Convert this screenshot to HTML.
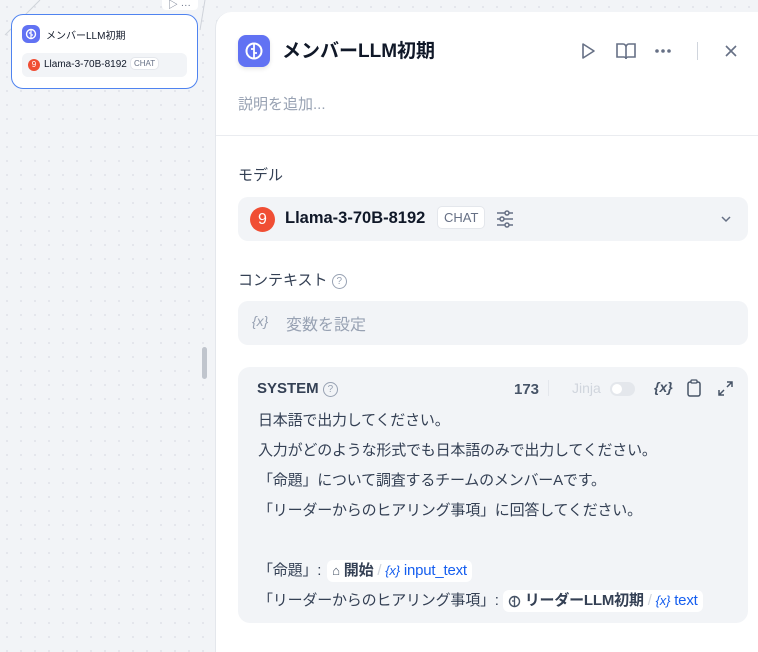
<!DOCTYPE html>
<html><head><meta charset="utf-8"><style>
*{box-sizing:border-box;margin:0;padding:0}
body{width:758px;height:631px;overflow:hidden;position:relative;background:#f2f4f7;font-family:"Liberation Sans","Noto Sans CJK JP",sans-serif;color:#101828;
background-image:radial-gradient(#dfe2e8 1px,transparent 1px);background-size:14px 14px}
.node{position:absolute;left:11px;top:14px;width:187px;height:75px;background:#fff;border:1.5px solid #4f83f0;border-radius:12px}
.ic{background:#6172f3;border-radius:6px;display:flex;align-items:center;justify-content:center}
.panel{position:absolute;left:215px;top:12px;width:560px;height:640px;background:#fff;border-top-left-radius:16px;border-left:1px solid #e4e7ec}
.abs{position:absolute}
.gray{color:#98a2b3}
.box{position:absolute;left:22px;width:510px;background:#f2f4f7;border-radius:10px}
.tag{border:1px solid #e4e7ec;border-radius:5px;background:#fff;color:#667085}
.chip{display:inline-flex;align-items:center;background:#fff;border-radius:6px;padding:0 5px;height:22px;vertical-align:middle;font-size:15px}
</style></head><body>
<svg class="abs" style="left:0;top:0" width="215" height="40"><path d="M5 35 C20 20 30 10 40 0" stroke="#cfd3da" fill="none"/><path d="M205 0 L200 30" stroke="#cfd3da" fill="none"/></svg>
<div class="abs" style="left:162px;top:-4px;width:36px;height:14px;background:#fff;border-radius:4px;font-size:10px;color:#667085;padding-left:6px">▷ ···</div>
<div class="node">
 <div class="ic abs" style="left:10px;top:10px;width:18px;height:18px"><svg width="12" height="12" viewBox="0 0 12 12"><circle cx="6" cy="6" r="4.5" stroke="#fff" stroke-width="1.4" fill="none"/><path d="M6 2v8M4 5h2M6 7h2" stroke="#fff" stroke-width="1.2"/></svg></div>
 <div class="abs" style="left:34px;top:12px;font-size:10px">メンバーLLM初期</div>
 <div class="abs" style="left:10px;top:38px;width:165px;height:24px;background:#f2f4f7;border-radius:6px">
  <div class="abs" style="left:6px;top:6px;width:12px;height:12px;border-radius:50%;background:#f04e34;color:#fff;font-size:8px;text-align:center;line-height:12px">9</div>
  <div class="abs" style="left:22px;top:6px;font-size:10px">Llama-3-70B-8192</div>
  <div class="abs tag" style="left:108px;top:4px;font-size:8px;padding:1px 3px">CHAT</div>
 </div>
</div>
<div class="abs" style="left:202px;top:347px;width:5px;height:32px;border-radius:3px;background:#c0c5cd"></div>
<div class="panel">
 <div class="ic abs" style="left:22px;top:23px;width:32px;height:32px;border-radius:8px;box-shadow:0 2px 4px rgba(0,0,0,.1)"><svg width="20" height="20" viewBox="0 0 20 20"><circle cx="10" cy="10" r="7.5" stroke="#fff" stroke-width="2" fill="none"/><path d="M10 3v14M7 8h3M10 12h3" stroke="#fff" stroke-width="1.8"/></svg></div>
 <div class="abs" style="left:66px;top:26px;font-size:19px;line-height:28px;font-weight:bold">メンバーLLM初期</div>
 <svg class="abs" style="left:362px;top:29px" width="20" height="20" viewBox="0 0 20 20"><path d="M5 3l11 7-11 7z" stroke="#667085" stroke-width="1.6" fill="none" stroke-linejoin="round"/></svg>
 <svg class="abs" style="left:399px;top:29px" width="22" height="20" viewBox="0 0 22 20"><path d="M2 3h6a3 3 0 013 3v12a2 2 0 00-2-2H2zM20 3h-6a3 3 0 00-3 3v12a2 2 0 012-2h7z" stroke="#667085" stroke-width="1.6" fill="none"/></svg>
 <svg class="abs" style="left:438px;top:36px" width="18" height="6"><circle cx="3" cy="3" r="1.8" fill="#667085"/><circle cx="9" cy="3" r="1.8" fill="#667085"/><circle cx="15" cy="3" r="1.8" fill="#667085"/></svg>
 <div class="abs" style="left:481px;top:30px;width:1px;height:18px;background:#d0d5dd"></div>
 <svg class="abs" style="left:508px;top:32px" width="14" height="14"><path d="M2 2l10 10M12 2L2 12" stroke="#667085" stroke-width="1.6"/></svg>
 <div class="abs gray" style="left:22px;top:81px;font-size:15px">説明を追加...</div>
 <div class="abs" style="left:0;top:123px;width:560px;height:1px;background:#eaecf0"></div>
 <div class="abs" style="left:22px;top:152px;font-size:15px;color:#344054">モデル</div>
 <div class="box" style="top:185px;height:44px">
  <div class="abs" style="left:12px;top:10px;width:25px;height:25px;border-radius:50%;background:#f04e34;color:#fff;font-size:16px;text-align:center;line-height:25px">9</div>
  <div class="abs" style="left:47px;top:12px;font-size:16.5px;font-weight:bold">Llama-3-70B-8192</div>
  <div class="abs tag" style="left:199px;top:9px;font-size:13px;padding:3px 6px">CHAT</div>
  <svg class="abs" style="left:257px;top:12px" width="20" height="20" viewBox="0 0 20 20" stroke="#667085" stroke-width="1.5" fill="none"><path d="M2 4h16M2 10h16M2 16h16"/><circle cx="12" cy="4" r="2" fill="#f2f4f7"/><circle cx="7" cy="10" r="2" fill="#f2f4f7"/><circle cx="12" cy="16" r="2" fill="#f2f4f7"/></svg>
  <svg class="abs" style="left:482px;top:18px" width="12" height="8"><path d="M2 2l4 4 4-4" stroke="#667085" stroke-width="1.5" fill="none"/></svg>
 </div>
 <div class="abs" style="left:22px;top:257px;font-size:15px;color:#344054">コンテキスト <span style="display:inline-block;width:15px;height:15px;border:1.3px solid #98a2b3;border-radius:50%;font-size:10px;text-align:center;line-height:13px;color:#98a2b3;vertical-align:1px">?</span></div>
 <div class="box" style="top:289px;height:44px">
  <div class="abs gray" style="left:14px;top:12px;font-size:14px;font-style:italic">{x}</div>
  <div class="abs gray" style="left:48px;top:10px;font-size:16px">変数を設定</div>
 </div>
 <div class="box" style="top:355px;height:256px;border-radius:12px">
  <div class="abs" style="left:19px;top:13px;font-size:15px;font-weight:bold;color:#344054">SYSTEM <span style="display:inline-block;width:15px;height:15px;border:1.3px solid #98a2b3;border-radius:50%;font-size:10px;text-align:center;line-height:13px;color:#98a2b3;font-weight:normal;vertical-align:1px">?</span></div>
  <div class="abs" style="left:276px;top:14px;font-size:15px;font-weight:bold;color:#475467">173</div>
  <div class="abs" style="left:310px;top:13px;width:1px;height:16px;background:#e4e7ec"></div>
  <div class="abs" style="left:334px;top:13px;font-size:14px;color:#d0d5dd">Jinja</div>
  <div class="abs" style="left:372px;top:15px;width:25px;height:14px;border-radius:7px;background:#e4e7ec"><div style="margin:2px;width:10px;height:10px;border-radius:50%;background:#fff"></div></div>
  <div class="abs" style="left:416px;top:12px;font-size:14px;font-style:italic;color:#475467;font-weight:bold">{x}</div>
  <svg class="abs" style="left:448px;top:12px" width="16" height="18" viewBox="0 0 16 18"><rect x="2" y="3" width="12" height="14" rx="2" stroke="#475467" stroke-width="1.5" fill="none"/><rect x="5" y="1" width="6" height="3" rx="1" stroke="#475467" stroke-width="1.3" fill="#f2f4f7"/></svg>
  <svg class="abs" style="left:480px;top:14px" width="15" height="15" viewBox="0 0 15 15" stroke="#475467" stroke-width="1.5" fill="none"><path d="M9 1h5v5M14 1L9 6M6 14H1V9M1 14l5-5"/></svg>
  <div class="abs" style="left:20px;top:39px;font-size:15px;line-height:30px;color:#344054;white-space:nowrap;letter-spacing:-0.2px">
   日本語で出力してください。<br>入力がどのような形式でも日本語のみで出力してください。<br>「命題」について調査するチームのメンバーAです。<br>「リーダーからのヒアリング事項」に回答してください。<br><br>
   「命題」: <span class="chip" style="margin-left:2px"><span style="color:#475467;font-size:13px">⌂</span>&nbsp;<b style="color:#344054">開始</b>&nbsp;<span style="color:#d0d5dd">/</span>&nbsp;<span style="color:#155eef"><i style="font-size:13px">{x}</i> input_text</span></span><br>
   「リーダーからのヒアリング事項」: <span class="chip"><svg width="13" height="13" viewBox="0 0 13 13"><circle cx="6.5" cy="6.5" r="5" stroke="#475467" stroke-width="1.4" fill="none"/><path d="M6.5 2v9M4 6h2.5" stroke="#475467" stroke-width="1.3"/></svg>&nbsp;<b style="color:#344054">リーダーLLM初期</b>&nbsp;<span style="color:#d0d5dd">/</span>&nbsp;<span style="color:#155eef"><i style="font-size:13px">{x}</i> text</span></span>
  </div>
 </div>
</div>
</body></html>
